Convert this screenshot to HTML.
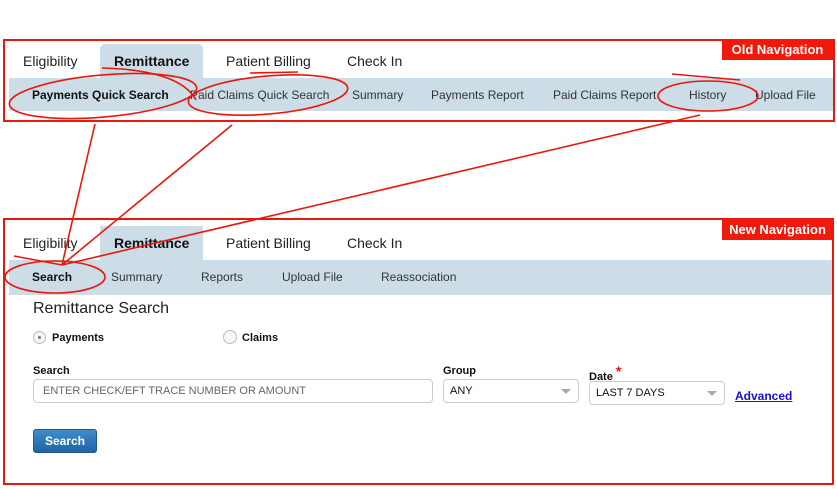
<!DOCTYPE html>
<html><head><style>
body{margin:0;width:837px;height:489px;background:#fff;font-family:"Liberation Sans",Arial,sans-serif;position:relative;overflow:hidden}
.abs{position:absolute}
.box{position:absolute;border:2px solid #e8180c;box-sizing:border-box}
.lbl{position:absolute;background:#f0190b;color:#fff;font-weight:bold;font-size:13px;text-align:center;line-height:21px}
.tab{position:absolute;font-size:14px;color:#222}
.sub{position:absolute;background:#ccdde8}
.si{position:absolute;font-size:12px;color:#333}
.b{font-weight:bold;color:#111}
.fl{position:absolute;font-size:11px;font-weight:bold;color:#111}
.inp{position:absolute;border:1px solid #ccc;border-radius:4px;box-sizing:border-box;font-size:11px;color:#666;padding-left:9px;line-height:22px}
.sel{position:absolute;border:1px solid #ccc;border-radius:4px;box-sizing:border-box;font-size:11px;color:#111;padding-left:6px;line-height:22px}
.arr{position:absolute;right:7px;top:9px;width:0;height:0;border-left:5px solid transparent;border-right:5px solid transparent;border-top:5px solid #aaa}
</style></head><body>
<div class="box" style="left:3px;top:39px;width:832px;height:83px"></div>
<div class="lbl" style="left:722px;top:39px;width:111px">Old Navigation</div>
<div class="abs" style="left:100px;top:44px;width:103px;height:34px;background:#ccdde8;border-radius:5px 5px 0 0"></div>
<div class="tab" style="left:23px;top:53px">Eligibility</div>
<div class="tab b" style="left:114px;top:53px">Remittance</div>
<div class="tab" style="left:226px;top:53px">Patient Billing</div>
<div class="tab" style="left:347px;top:53px">Check In</div>
<div class="sub" style="left:9px;top:78px;width:824px;height:33px"></div>
<div class="si b" style="left:32px;top:88px">Payments Quick Search</div>
<div class="si" style="left:190px;top:88px">Paid Claims Quick Search</div>
<div class="si" style="left:352px;top:88px">Summary</div>
<div class="si" style="left:431px;top:88px">Payments Report</div>
<div class="si" style="left:553px;top:88px">Paid Claims Report</div>
<div class="si" style="left:689px;top:88px">History</div>
<div class="si" style="left:755px;top:88px">Upload File</div>

<div class="box" style="left:3px;top:218px;width:831px;height:267px"></div>
<div class="lbl" style="left:722px;top:219px;width:111px">New Navigation</div>
<div class="abs" style="left:100px;top:226px;width:103px;height:34px;background:#ccdde8"></div>
<div class="tab" style="left:23px;top:235px">Eligibility</div>
<div class="tab b" style="left:114px;top:235px">Remittance</div>
<div class="tab" style="left:226px;top:235px">Patient Billing</div>
<div class="tab" style="left:347px;top:235px">Check In</div>
<div class="sub" style="left:9px;top:260px;width:823px;height:35px"></div>
<div class="si b" style="left:32px;top:270px">Search</div>
<div class="si" style="left:111px;top:270px">Summary</div>
<div class="si" style="left:201px;top:270px">Reports</div>
<div class="si" style="left:282px;top:270px">Upload File</div>
<div class="si" style="left:381px;top:270px">Reassociation</div>
<div class="abs" style="left:33px;top:300px;font-size:16px;color:#222">Remittance Search</div>
<div class="abs" style="left:33px;top:331px;width:13px;height:13px;border:1px solid #bbb;border-radius:50%;box-sizing:border-box;background:#f6f6f6"><div style="position:absolute;left:4px;top:4px;width:3px;height:3px;border-radius:50%;background:#777"></div></div>
<div class="fl" style="left:52px;top:332px">Payments</div>
<div class="abs" style="left:223px;top:330px;width:14px;height:14px;border:1px solid #bbb;border-radius:50%;box-sizing:border-box;background:#f6f6f6"></div>
<div class="fl" style="left:242px;top:332px">Claims</div>
<div class="fl" style="left:33px;top:365px">Search</div>
<div class="inp" style="left:33px;top:379px;width:400px;height:24px">ENTER CHECK/EFT TRACE NUMBER OR AMOUNT</div>
<div class="fl" style="left:443px;top:365px">Group</div>
<div class="sel" style="left:443px;top:379px;width:136px;height:24px">ANY<div class="arr"></div></div>
<div class="fl" style="left:589px;top:367px">Date <span style="color:#e8180c;font-size:14px;position:relative;top:-4px">*</span></div>
<div class="sel" style="left:589px;top:381px;width:136px;height:24px">LAST 7 DAYS<div class="arr"></div></div>
<div class="abs" style="left:735px;top:389px;font-size:12px;font-weight:bold;color:#1a0dd8;text-decoration:underline">Advanced</div>
<div class="abs" style="left:33px;top:429px;width:64px;height:24px;border-radius:3px;background:linear-gradient(#3f8ccc,#1f64a6);border:1px solid #1d5a94;box-sizing:border-box;color:#fff;font-weight:bold;font-size:12px;text-align:center;line-height:22px">Search</div>

<svg class="abs" style="left:0;top:0" width="837" height="489" fill="none" stroke="#e8180c" stroke-width="1.6">
<ellipse cx="103" cy="96" rx="94" ry="21" transform="rotate(-5 103 96)"/>
<ellipse cx="268" cy="95" rx="80" ry="19" transform="rotate(-5 268 95)"/>
<ellipse cx="708" cy="96" rx="50" ry="15"/>
<ellipse cx="55" cy="277" rx="50" ry="16"/>
<path d="M102 68 Q180 70 196 100"/>
<path d="M250 73 L298 72"/>
<path d="M672 74 L740 80"/>
<path d="M95 124 L62 265"/>
<path d="M232 125 L62 265"/>
<path d="M700 115 L62 265"/>
<path d="M14 256 L62 265"/>
</svg>
</body></html>
